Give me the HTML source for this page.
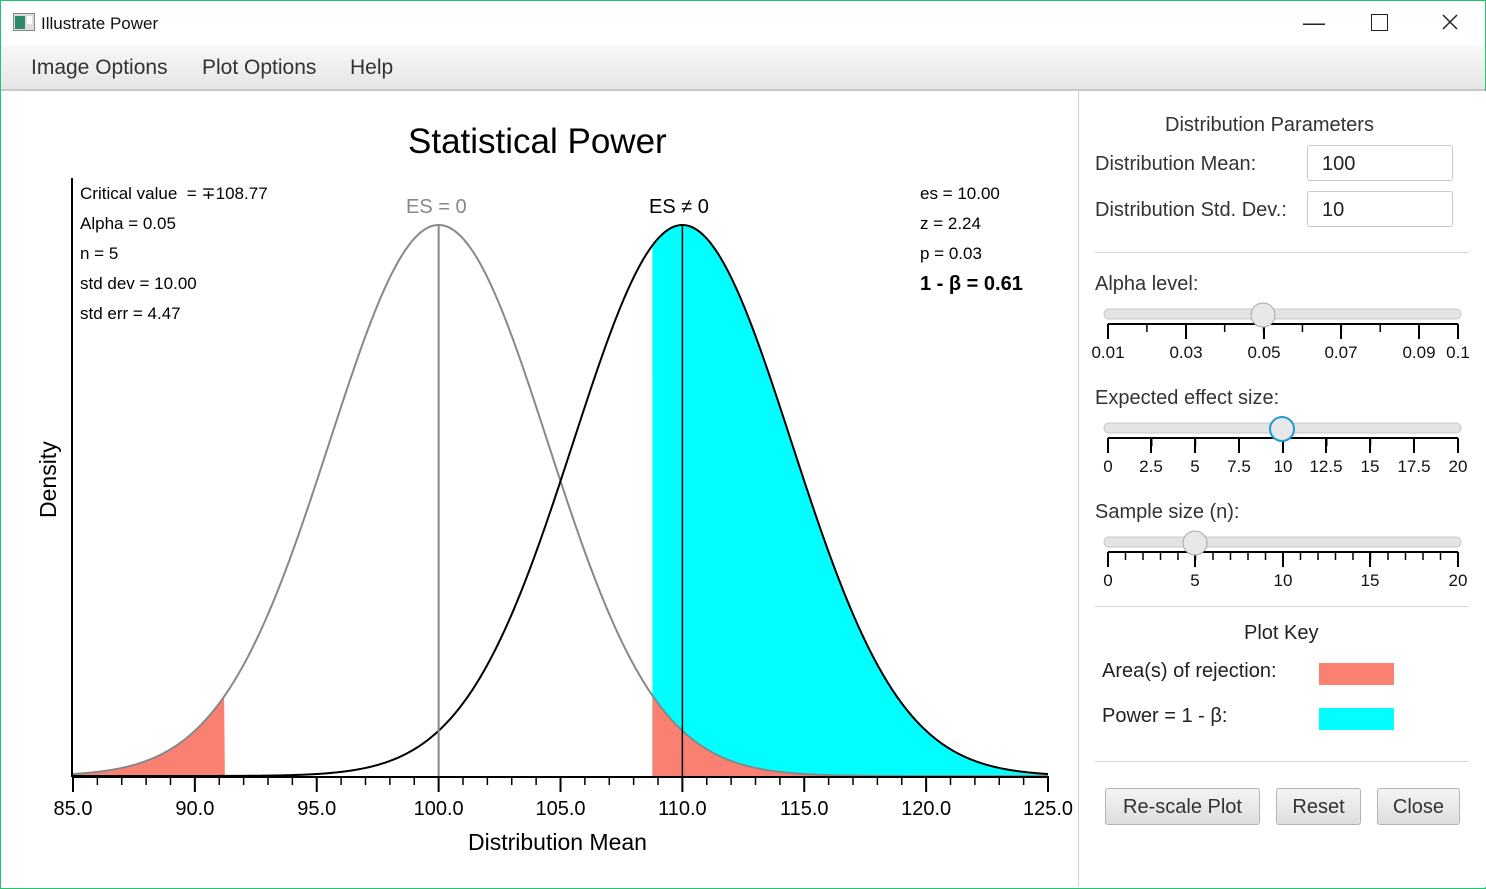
<!DOCTYPE html>
<html><head><meta charset="utf-8"><style>
body{margin:0;width:1486px;height:889px;overflow:hidden;background:#fff;font-family:"Liberation Sans",sans-serif;position:relative}
.win{position:absolute;left:0;top:0;width:1484px;height:887px;border:1px solid #1fc76a}
.t{position:absolute;white-space:nowrap}
.menu{position:absolute;left:1px;top:46px;width:1484px;height:43px;background:linear-gradient(#f7f7f7,#e6e6e6);border-bottom:2px solid #c8c8c8}
.side{position:absolute;left:1078px;top:91px;width:407px;height:796px;border-left:1px solid #d0d0d0;background:#fff}
.inp{position:absolute;width:146px;height:36px;border:1px solid #c8c8c8;border-radius:3px;background:#fff;font-size:20px;line-height:36px;padding-left:14px;box-sizing:border-box;color:#222}
.hr{position:absolute;left:1095px;width:374px;height:1px;background:#d6d6d6}
.btn{position:absolute;top:788px;height:37px;border:1px solid #b3b3b3;border-radius:3px;background:linear-gradient(#f4f4f4,#dedede);font-size:20px;line-height:36px;text-align:center;color:#333;box-sizing:border-box}
</style></head><body>
<div class="win"></div>
<svg class="t" style="left:13px;top:13px" width="22" height="18"><rect x="0.5" y="0.5" width="21" height="17" fill="#ddd" stroke="#888"/><rect x="2" y="3" width="10" height="13" fill="#2f8a6a"/><rect x="14" y="3" width="5" height="8" fill="#fff"/></svg>
<div class="t" style="left:41px;top:14px;font-size:17px;color:#111">Illustrate Power</div>
<div class="t" style="left:1303px;top:10px;font-size:22px;color:#222">—</div>
<div class="t" style="left:1371px;top:14px;width:15px;height:15px;border:1.5px solid #222"></div>
<svg class="t" style="left:1442px;top:14px" width="16" height="16"><path d="M1 1L15 15M15 1L1 15" stroke="#222" stroke-width="1.5"/></svg>
<div class="menu">
<div class="t" style="left:30px;top:10px;font-size:21px;color:#333">Image Options</div>
<div class="t" style="left:201px;top:10px;font-size:21px;color:#333">Plot Options</div>
<div class="t" style="left:349px;top:10px;font-size:21px;color:#333">Help</div>
</div>
<svg id="plot" class="t" style="left:0;top:91px" width="1077" height="796"></svg>
<div class="t" style="left:408px;top:122px;font-size:35px;color:#000">Statistical Power</div>
<div class="t" style="left:80px;top:179px;font-size:17px;line-height:30px;color:#000">Critical value &nbsp;= ∓108.77<br>Alpha = 0.05<br>n = 5<br>std dev = 10.00<br>std err = 4.47</div>
<div class="t" style="left:920px;top:179px;font-size:17px;line-height:30px;color:#000">es = 10.00<br>z = 2.24<br>p = 0.03<br><b style="font-size:20px">1 - β = 0.61</b></div>
<div class="t" style="left:406px;top:196px;font-size:20px;color:#888">ES = 0</div>
<div class="t" style="left:649px;top:196px;font-size:20px;color:#000">ES ≠ 0</div>
<div class="t" style="left:35px;top:518px;font-size:23px;transform:rotate(-90deg);transform-origin:0 0">Density</div>
<div class="t" style="left:468px;top:829px;font-size:23px">Distribution Mean</div>
<div class="side"></div>
<div class="t" style="left:1165px;top:114px;font-size:20px;color:#333">Distribution Parameters</div>
<div class="t" style="left:1095px;top:153px;font-size:20px;color:#333">Distribution Mean:</div>
<div class="t" style="left:1095px;top:199px;font-size:20px;color:#333">Distribution Std. Dev.:</div>
<div class="inp" style="left:1307px;top:145px">100</div>
<div class="inp" style="left:1307px;top:191px">10</div>
<div class="hr" style="top:252px"></div>
<div class="t" style="left:1095px;top:273px;font-size:20px;color:#333">Alpha level:</div>
<div class="t" style="left:1095px;top:387px;font-size:20px;color:#333">Expected effect size:</div>
<div class="t" style="left:1095px;top:501px;font-size:20px;color:#333">Sample size (n):</div>
<svg id="sl" class="t" style="left:1085px;top:290px" width="400" height="310"></svg>
<div class="hr" style="top:606px"></div>
<div class="t" style="left:1244px;top:622px;font-size:20px;color:#222">Plot Key</div>
<div class="t" style="left:1102px;top:660px;font-size:20px;color:#222">Area(s) of rejection:</div>
<div class="t" style="left:1102px;top:705px;font-size:20px;color:#222">Power = 1 - β:</div>
<div class="t" style="left:1319px;top:663px;width:75px;height:22px;background:#fa8072"></div>
<div class="t" style="left:1319px;top:708px;width:75px;height:22px;background:#00ffff"></div>
<div class="hr" style="top:761px"></div>
<div class="btn" style="left:1105px;width:155px">Re-scale Plot</div>
<div class="btn" style="left:1276px;width:85px">Reset</div>
<div class="btn" style="left:1377px;width:83px">Close</div>
<script>
var ns="http://www.w3.org/2000/svg";
function el(p,t,a){var e=document.createElementNS(ns,t);for(var k in a)e.setAttribute(k,a[k]);p.appendChild(e);return e;}
var P=document.getElementById('plot');var oy=91;
var X=function(v){return 73+(v-85)*24.375};var B=776-oy,H=551,se=4.472;
function Y(v,m){return B-H*Math.exp(-0.5*Math.pow((v-m)/se,2));}
function curve(m,a,b){var s="";for(var v=a;v<=b+1e-9;v+=0.05){s+=(s?"L":"M")+X(v).toFixed(2)+" "+Y(v,m).toFixed(2);}return s;}
function area(m,a,b){return curve(m,a,b)+"L"+X(b)+" "+B+"L"+X(a)+" "+B+"Z";}
el(P,'path',{d:area(110,108.77,125),fill:'#00ffff'});
el(P,'path',{d:area(100,108.77,125),fill:'#fa8072'});
el(P,'path',{d:area(100,85,91.23),fill:'#fa8072'});
el(P,'path',{d:curve(100,85,125),fill:'none',stroke:'#888','stroke-width':2});
el(P,'path',{d:curve(110,85,125),fill:'none',stroke:'#000','stroke-width':2});
el(P,'line',{x1:X(100),y1:Y(100,100),x2:X(100),y2:B,stroke:'#888','stroke-width':2});
el(P,'line',{x1:X(110),y1:Y(110,110),x2:X(110),y2:B,stroke:'#000','stroke-width':1.5});
el(P,'line',{x1:72,y1:178-oy,x2:72,y2:B+1,stroke:'#000','stroke-width':2});
el(P,'line',{x1:72,y1:B+1,x2:1049,y2:B+1,stroke:'#000','stroke-width':2});
for(var v=85;v<=125;v++){var maj=v%5==0;el(P,'line',{x1:X(v),y1:B+1,x2:X(v),y2:B+(maj?16:9),stroke:'#000','stroke-width':maj?2:1.5});
if(maj){var t=el(P,'text',{x:X(v),y:B+39,'text-anchor':'middle','font-size':20,'font-family':'Liberation Sans'});t.textContent=v.toFixed(1);}}
var S=document.getElementById('sl');
function slider(y,th,labs,nmin,focus){el(S,'rect',{x:19,y:y-5,width:357,height:10,rx:5,fill:'#e4e4e4',stroke:'#c8c8c8'});
el(S,'line',{x1:23,y1:y+10,x2:373,y2:y+10,stroke:'#000','stroke-width':2});
for(var i=0;i<=nmin;i++){var x=23+350*i/nmin;el(S,'line',{x1:x,y1:y+10,x2:x,y2:y+18,stroke:'#000','stroke-width':1.5});}
labs.forEach(function(l){el(S,'line',{x1:l[0],y1:y+10,x2:l[0],y2:y+25,stroke:'#000','stroke-width':2});var t=el(S,'text',{x:l[0],y:y+44,'text-anchor':'middle','font-size':17,'font-family':'Liberation Sans',fill:'#111'});t.textContent=l[1];});
el(S,'circle',{cx:th,cy:y+1,r:12,fill:'#e8e8e8',stroke:focus?'#1e9ad6':'#a8a8a8','stroke-width':focus?2:1});}
slider(24,178,[[23,'0.01'],[101,'0.03'],[179,'0.05'],[256,'0.07'],[334,'0.09'],[373,'0.1']],9);
slider(138,197,[[23,'0'],[66,'2.5'],[110,'5'],[154,'7.5'],[198,'10'],[241,'12.5'],[285,'15'],[329,'17.5'],[373,'20']],8,1);
slider(252,110,[[23,'0'],[110,'5'],[198,'10'],[285,'15'],[373,'20']],20);
</script>
</body></html>
